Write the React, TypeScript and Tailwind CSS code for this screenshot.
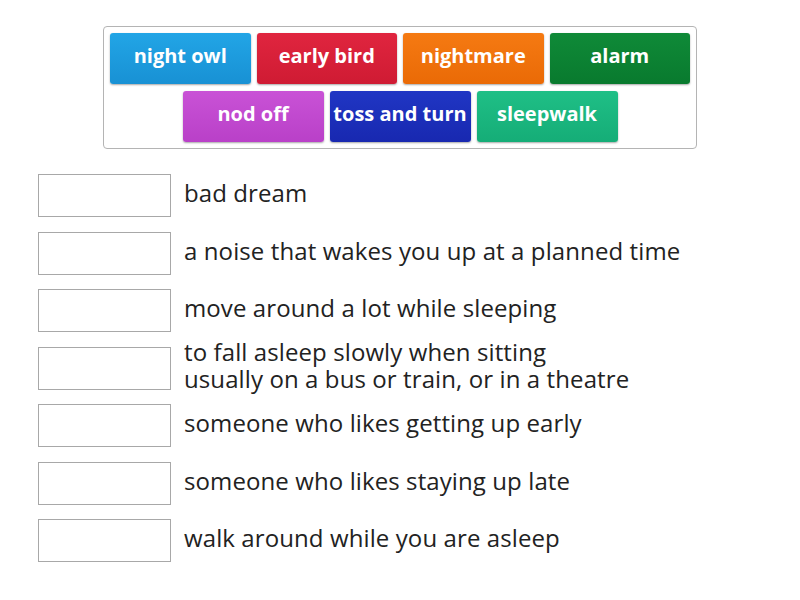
const tiles = [
  [
    { label: 'night owl', color: 'bg-gradient-to-b from-[#22a5e6] to-[#1891d4]' },
    { label: 'early bird', color: 'bg-gradient-to-b from-[#e0253f] to-[#cf1b33]' },
    { label: 'nightmare', color: 'bg-gradient-to-b from-[#f57a12] to-[#ea6a06]' },
    { label: 'alarm', color: 'bg-gradient-to-b from-[#0f8a38] to-[#097a2e]' },
  ],
  [
    { label: 'nod off', color: 'bg-gradient-to-b from-[#c952d6] to-[#b940c8]' },
    { label: 'toss and turn', color: 'bg-gradient-to-b from-[#2036c4] to-[#1828b0]' },
    { label: 'sleepwalk', color: 'bg-gradient-to-b from-[#1fbf86] to-[#15ad77]' },
  ],
]

const clues = [
  ['bad dream'],
  ['a noise that wakes you up at a planned time'],
  ['move around a lot while sleeping'],
  ['to fall asleep slowly when sitting', 'usually on a bus or train, or in a theatre'],
  ['someone who likes getting up early'],
  ['someone who likes staying up late'],
  ['walk around while you are asleep'],
]

const Tile = ({ label, color }: { label: string; color: string }) => (
  <div
    className={`${color} w-[141px] h-[51px] pb-[5px] rounded-[3px] shadow-[0_1px_2px_rgba(0,0,0,0.35)] flex items-center justify-center text-white text-[20px] font-bold whitespace-nowrap`}
  >
    {label}
  </div>
)

export default function App() {
  return (
    <div className="w-[800px] h-[600px] bg-white font-['Open_Sans',sans-serif] text-[#222]">
      <div className="pt-[26px] flex justify-center">
        <div className="w-[594px] border border-[#b4b4b4] rounded-[4px] p-[6px] flex flex-col gap-[7px]">
          {tiles.map((row, i) => (
            <div key={i} className="flex justify-center gap-[6px]">
              {row.map((t) => (
                <Tile key={t.label} label={t.label} color={t.color} />
              ))}
            </div>
          ))}
        </div>
      </div>
      <div className="mt-[25px] pl-[38px] flex flex-col gap-[14.5px]">
        {clues.map((lines, i) => (
          <div key={i} className="flex items-center gap-[13px] h-[43px]">
            <div className="w-[133px] h-[43px] border border-[#a8a8a8] bg-white shrink-0" />
            <p className="text-[24px] leading-[27px] tracking-[0.1px] mb-[6px] text-[#222]">
              {lines[0]}
              {lines[1] && (
                <>
                  <br />
                  {lines[1]}
                </>
              )}
            </p>
          </div>
        ))}
      </div>
    </div>
  )
}
